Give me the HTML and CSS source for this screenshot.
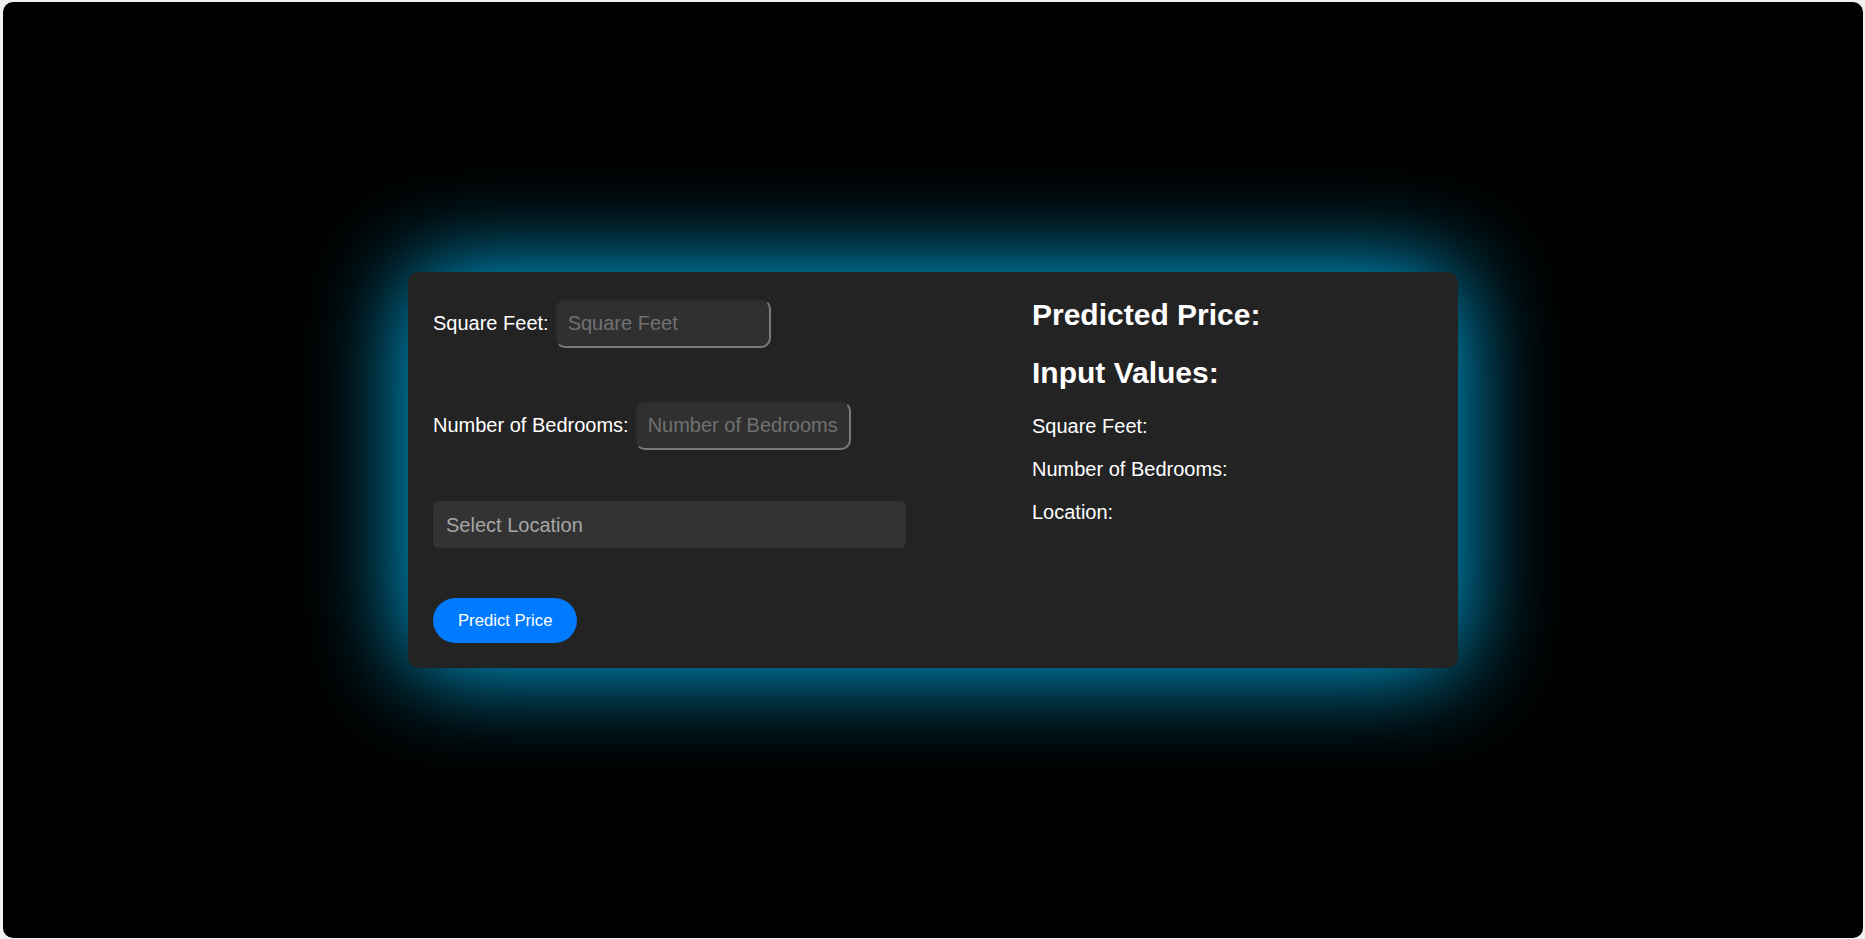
FILE: index.html
```html
<!DOCTYPE html>
<html lang="en">
  <head>
    <meta charset="UTF-8" />
    <meta name="viewport" content="width=device-width, initial-scale=1.0" />
    <title>House Price Predictor</title>
    <link rel="stylesheet" href="styles.css">
  </head>
  <body>
    <div class="screen">
      <div class="card">
        <form class="predict-form">
          <div class="form-row">
            <label for="sqft">Square Feet:</label>
            <input type="number" id="sqft" placeholder="Square Feet" />
          </div>
          <div class="form-row">
            <label for="bedrooms">Number of Bedrooms:</label>
            <input type="number" id="bedrooms" placeholder="Number of Bedrooms" />
          </div>
          <div class="form-row">
            <select id="location">
              <option value="">Select Location</option>
            </select>
          </div>
          <button type="button" id="predict">Predict Price</button>
        </form>

        <div class="results">
          <h2>Predicted Price:</h2>
          <h2>Input Values:</h2>
          <p>Square Feet:</p>
          <p>Number of Bedrooms:</p>
          <p>Location:</p>
        </div>
      </div>
    </div>
  </body>
</html>
```

FILE: styles.css
```css
html {
  background-color: #f1f1f1;
}
body {
  margin: 0;
  font-family: "Liberation Sans", Arial, sans-serif;
  color: #fff;
}
.screen {
  margin: 2px 2px 1px 3px;
  height: 936px;
  background-color: #000;
  border-radius: 10px;
  display: flex;
  align-items: center;
  justify-content: center;
}
.card {
  width: 1050px;
  box-sizing: border-box;
  padding: 0 25px;
  display: grid;
  grid-template-columns: 599px 1fr;
  background-color: #232323;
  border-radius: 10px;
  box-shadow: 0 0 100px #00bfff;
}
.predict-form {
  padding: 27px 0 25px;
}
.form-row {
  display: flex;
  align-items: center;
  height: 49px;
  margin-bottom: 53px;
  font-size: 20px;
  line-height: 23px;
}
.form-row:nth-child(2) {
  margin-bottom: 51px;
}
.form-row:nth-child(3) {
  height: 47px;
  margin-bottom: 50px;
}
label {
  margin-right: 6px;
}
input {
  box-sizing: border-box;
  width: 216px;
  height: 49px;
  padding: 0 11px;
  font-family: inherit;
  font-size: 20px;
  color: #fff;
  background-color: #303030;
  border: 2px solid;
  border-color: #2a2a2a #7a7a7a #7a7a7a #2a2a2a;
  border-radius: 10px;
  outline: none;
}
input::placeholder {
  color: #707070;
}
input::-webkit-outer-spin-button,
input::-webkit-inner-spin-button {
  -webkit-appearance: none;
  margin: 0;
}
select {
  appearance: none;
  -webkit-appearance: none;
  box-sizing: border-box;
  width: 473px;
  height: 47px;
  padding: 0 13px;
  font-family: inherit;
  font-size: 20px;
  color: #a6a6a6;
  background-color: #333;
  border: none;
  border-radius: 6px;
}
button {
  display: block;
  box-sizing: border-box;
  height: 45px;
  padding: 0 25px;
  white-space: nowrap;
  font-family: inherit;
  font-size: 16.67px;
  color: #fff;
  background-color: #007bff;
  border: none;
  border-radius: 25px;
  cursor: pointer;
}
.results {
  padding-top: 26px;
}
.results h2 {
  margin: 0 0 24px;
  font-size: 30px;
  line-height: 34px;
}
.results p {
  margin: 0 0 20px;
  font-size: 20px;
  line-height: 23px;
}
.results h2 + p {
  margin-top: 25px;
}
```
